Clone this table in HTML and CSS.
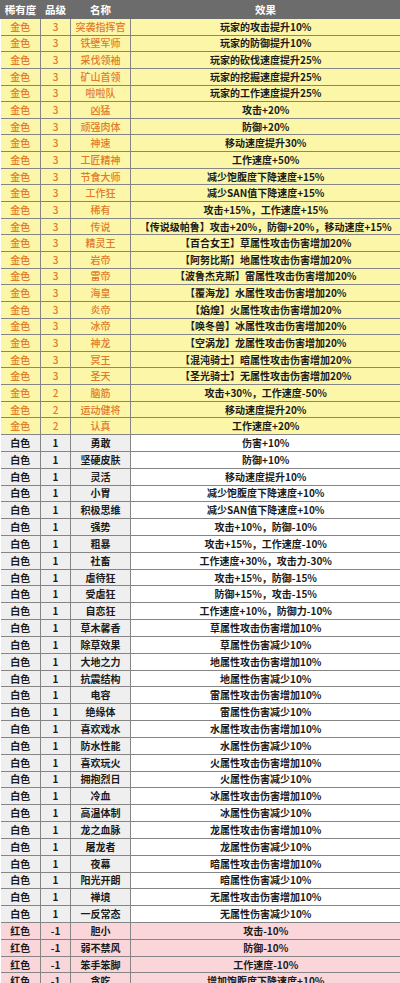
FILE: index.html
```html
<!DOCTYPE html>
<html lang="zh">
<head>
<meta charset="utf-8">
<link rel="stylesheet" href="styles.css">
</head>
<body>
<table class="traits">
<colgroup><col class="c1"><col class="c2"><col class="c3"><col class="c4"></colgroup>
<thead>
<tr><th>稀有度</th><th>品级</th><th>名称</th><th>效果</th></tr>
</thead>
<tbody>
<tr class="gold"><td>金色</td><td>3</td><td>突袭指挥官</td><td>玩家的攻击提升10%</td></tr>
<tr class="gold"><td>金色</td><td>3</td><td>铁壁军师</td><td>玩家的防御提升10%</td></tr>
<tr class="gold"><td>金色</td><td>3</td><td>采伐领袖</td><td>玩家的砍伐速度提升25%</td></tr>
<tr class="gold"><td>金色</td><td>3</td><td>矿山首领</td><td>玩家的挖掘速度提升25%</td></tr>
<tr class="gold"><td>金色</td><td>3</td><td>啦啦队</td><td>玩家的工作速度提升25%</td></tr>
<tr class="gold"><td>金色</td><td>3</td><td>凶猛</td><td>攻击+20%</td></tr>
<tr class="gold"><td>金色</td><td>3</td><td>顽强肉体</td><td>防御+20%</td></tr>
<tr class="gold"><td>金色</td><td>3</td><td>神速</td><td>移动速度提升30%</td></tr>
<tr class="gold"><td>金色</td><td>3</td><td>工匠精神</td><td>工作速度+50%</td></tr>
<tr class="gold"><td>金色</td><td>3</td><td>节食大师</td><td>减少饱腹度下降速度+15%</td></tr>
<tr class="gold"><td>金色</td><td>3</td><td>工作狂</td><td>减少SAN值下降速度+15%</td></tr>
<tr class="gold"><td>金色</td><td>3</td><td>稀有</td><td>攻击+15%，工作速度+15%</td></tr>
<tr class="gold"><td>金色</td><td>3</td><td>传说</td><td>【传说级帕鲁】攻击+20%，防御+20%，移动速度+15%</td></tr>
<tr class="gold"><td>金色</td><td>3</td><td>精灵王</td><td>【百合女王】草属性攻击伤害增加20%</td></tr>
<tr class="gold"><td>金色</td><td>3</td><td>岩帝</td><td>【阿努比斯】地属性攻击伤害增加20%</td></tr>
<tr class="gold"><td>金色</td><td>3</td><td>雷帝</td><td>【波鲁杰克斯】雷属性攻击伤害增加20%</td></tr>
<tr class="gold"><td>金色</td><td>3</td><td>海皇</td><td>【覆海龙】水属性攻击伤害增加20%</td></tr>
<tr class="gold"><td>金色</td><td>3</td><td>炎帝</td><td>【焰煌】火属性攻击伤害增加20%</td></tr>
<tr class="gold"><td>金色</td><td>3</td><td>冰帝</td><td>【唤冬兽】冰属性攻击伤害增加20%</td></tr>
<tr class="gold"><td>金色</td><td>3</td><td>神龙</td><td>【空涡龙】龙属性攻击伤害增加20%</td></tr>
<tr class="gold"><td>金色</td><td>3</td><td>冥王</td><td>【混沌骑士】暗属性攻击伤害增加20%</td></tr>
<tr class="gold"><td>金色</td><td>3</td><td>圣天</td><td>【圣光骑士】无属性攻击伤害增加20%</td></tr>
<tr class="gold"><td>金色</td><td>2</td><td>脑筋</td><td>攻击+30%，工作速度-50%</td></tr>
<tr class="gold"><td>金色</td><td>2</td><td>运动健将</td><td>移动速度提升20%</td></tr>
<tr class="gold"><td>金色</td><td>2</td><td>认真</td><td>工作速度+20%</td></tr>
<tr class="white"><td>白色</td><td>1</td><td>勇敢</td><td>伤害+10%</td></tr>
<tr class="white"><td>白色</td><td>1</td><td>坚硬皮肤</td><td>防御+10%</td></tr>
<tr class="white"><td>白色</td><td>1</td><td>灵活</td><td>移动速度提升10%</td></tr>
<tr class="white"><td>白色</td><td>1</td><td>小胃</td><td>减少饱腹度下降速度+10%</td></tr>
<tr class="white"><td>白色</td><td>1</td><td>积极思维</td><td>减少SAN值下降速度+10%</td></tr>
<tr class="white"><td>白色</td><td>1</td><td>强势</td><td>攻击+10%，防御-10%</td></tr>
<tr class="white"><td>白色</td><td>1</td><td>粗暴</td><td>攻击+15%，工作速度-10%</td></tr>
<tr class="white"><td>白色</td><td>1</td><td>社畜</td><td>工作速度+30%，攻击力-30%</td></tr>
<tr class="white"><td>白色</td><td>1</td><td>虐待狂</td><td>攻击+15%，防御-15%</td></tr>
<tr class="white"><td>白色</td><td>1</td><td>受虐狂</td><td>防御+15%，攻击-15%</td></tr>
<tr class="white"><td>白色</td><td>1</td><td>自恋狂</td><td>工作速度+10%，防御力-10%</td></tr>
<tr class="white"><td>白色</td><td>1</td><td>草木馨香</td><td>草属性攻击伤害增加10%</td></tr>
<tr class="white"><td>白色</td><td>1</td><td>除草效果</td><td>草属性伤害减少10%</td></tr>
<tr class="white"><td>白色</td><td>1</td><td>大地之力</td><td>地属性攻击伤害增加10%</td></tr>
<tr class="white"><td>白色</td><td>1</td><td>抗震结构</td><td>地属性伤害减少10%</td></tr>
<tr class="white"><td>白色</td><td>1</td><td>电容</td><td>雷属性攻击伤害增加10%</td></tr>
<tr class="white"><td>白色</td><td>1</td><td>绝缘体</td><td>雷属性伤害减少10%</td></tr>
<tr class="white"><td>白色</td><td>1</td><td>喜欢戏水</td><td>水属性攻击伤害增加10%</td></tr>
<tr class="white"><td>白色</td><td>1</td><td>防水性能</td><td>水属性伤害减少10%</td></tr>
<tr class="white"><td>白色</td><td>1</td><td>喜欢玩火</td><td>火属性攻击伤害增加10%</td></tr>
<tr class="white"><td>白色</td><td>1</td><td>拥抱烈日</td><td>火属性伤害减少10%</td></tr>
<tr class="white"><td>白色</td><td>1</td><td>冷血</td><td>冰属性攻击伤害增加10%</td></tr>
<tr class="white"><td>白色</td><td>1</td><td>高温体制</td><td>冰属性伤害减少10%</td></tr>
<tr class="white"><td>白色</td><td>1</td><td>龙之血脉</td><td>龙属性攻击伤害增加10%</td></tr>
<tr class="white"><td>白色</td><td>1</td><td>屠龙者</td><td>龙属性伤害减少10%</td></tr>
<tr class="white"><td>白色</td><td>1</td><td>夜幕</td><td>暗属性攻击伤害增加10%</td></tr>
<tr class="white"><td>白色</td><td>1</td><td>阳光开朗</td><td>暗属性伤害减少10%</td></tr>
<tr class="white"><td>白色</td><td>1</td><td>禅境</td><td>无属性攻击伤害增加10%</td></tr>
<tr class="white"><td>白色</td><td>1</td><td>一反常态</td><td>无属性伤害减少10%</td></tr>
<tr class="red"><td>红色</td><td>-1</td><td>胆小</td><td>攻击-10%</td></tr>
<tr class="red"><td>红色</td><td>-1</td><td>弱不禁风</td><td>防御-10%</td></tr>
<tr class="red"><td>红色</td><td>-1</td><td>笨手笨脚</td><td>工作速度-10%</td></tr>
<tr class="red"><td>红色</td><td>-1</td><td>贪吃</td><td>增加饱腹度下降速度+10%</td></tr>
</tbody>
</table>
</body>
</html>
```
FILE: styles.css
```css
html, body {
  margin: 0;
  padding: 0;
  background: #ffffff;
}
body {
  font-family: "Noto Sans CJK SC", "Noto Sans", sans-serif;
  font-size: 10px;
  color: #1a1a1a;
}
.traits {
  width: 400px;
  table-layout: fixed;
  border-collapse: collapse;
}
.c1 { width: 40px; }
.c2 { width: 30px; }
.c3 { width: 60px; }
.c4 { width: 270px; }
.traits th {
  height: 17px;
  padding: 0;
  background: #6c6c6c;
  color: #ffffff;
  font-weight: 700;
  font-size: 10.5px;
  line-height: 17px;
  text-align: center;
  border: 1px solid #6c6c6c;
}
.traits td {
  padding: 0;
  text-align: center;
  white-space: nowrap;
  overflow: visible;
  line-height: 14px;
  border: 1px solid #858585;
}
.gold td {
  height: 15.65px;
  background: #fbf6a8;
  color: #e27a2a;
  font-weight: 500;
}
.gold td:last-child {
  color: #1a1a1a;
  font-weight: 700;
}
.white td {
  height: 15.84px;
  background: #efefef;
  font-weight: 700;
}
.white td:last-child {
  background: #ffffff;
}
.red td {
  height: 15.8px;
  background: #fad6da;
  font-weight: 700;
}
.traits tr > td:first-child { border-left: none; }
.traits tr > td:last-child { border-right: none; }
```
